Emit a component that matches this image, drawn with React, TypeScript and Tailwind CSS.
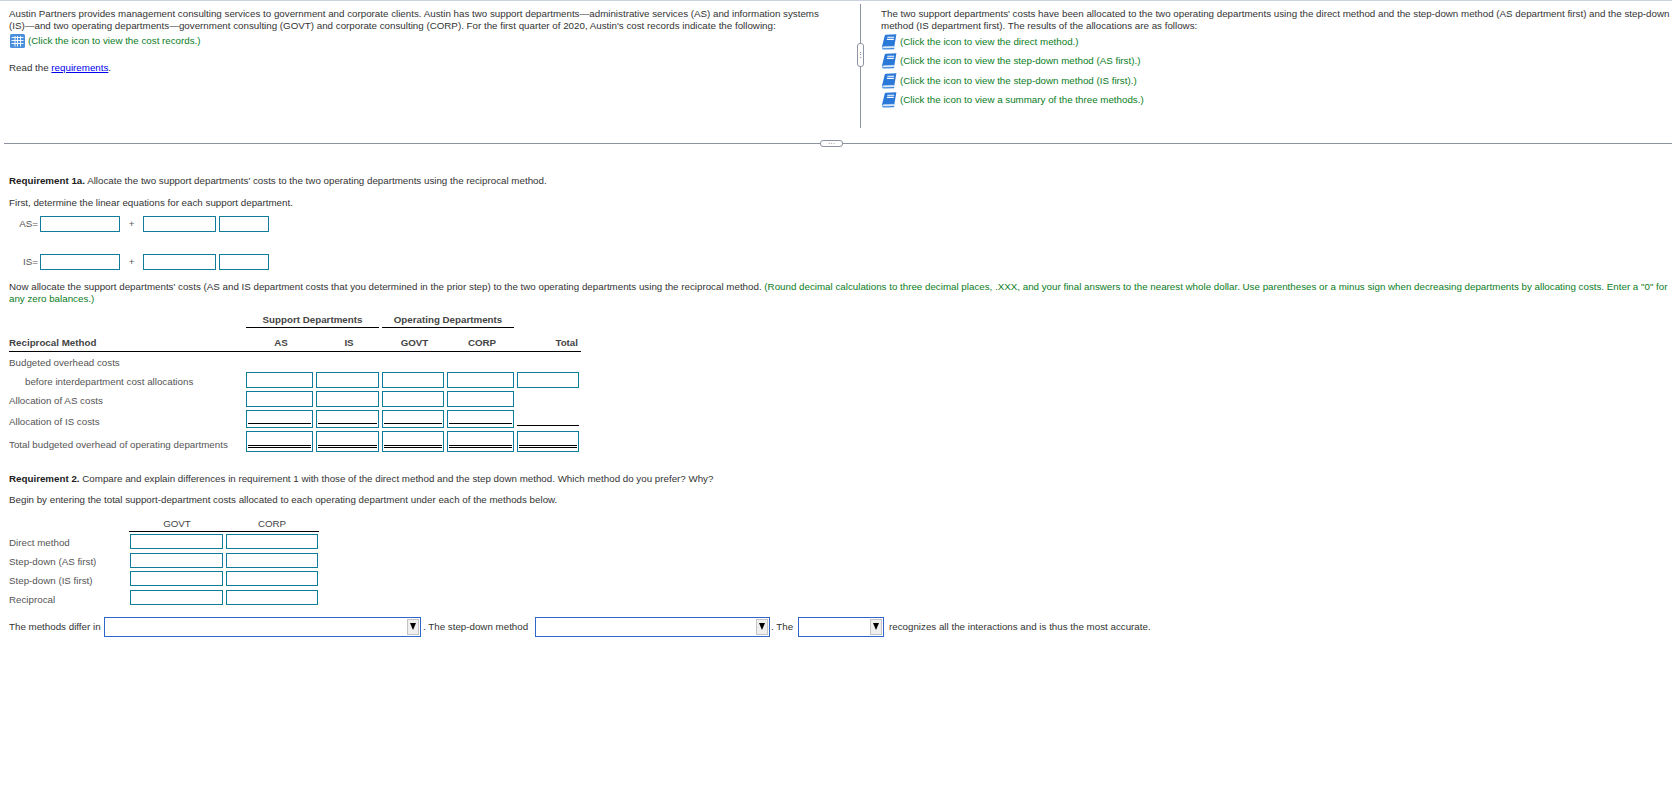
import type { ReactNode } from "react";

function GridIcon() {
  return (
    <svg width="15" height="14" viewBox="0 0 15 14" className="shrink-0">
      <rect x="0" y="0" width="15" height="14" rx="1.5" fill="#4a8fdc" />
      <path d="M1.5 3.5H13.5M1.5 6.5H13.5M1.5 9.5H13.5M5 2V12.5M7.5 2V12.5M10.5 2V12.5" stroke="#ffffff" strokeWidth="0.9" />
    </svg>
  );
}

function BookIcon() {
  return (
    <svg width="16" height="16" viewBox="0 0 16 16" className="shrink-0">
      <path d="M3.8 1.6 Q4 0.8 5 0.7 L15.4 0.2 L13.3 12.4 L3.2 12.8 Q1.5 13 1.3 14 L0.9 13 Z" fill="#2a78d8" />
      <path d="M1.2 13.6 Q1.4 12.6 3 12.5 L13.3 12.2 L13 13.6 L3 13.9 Z" fill="#ffffff" stroke="#7db0e8" strokeWidth="0.4" />
      <path d="M1 14 Q1.2 15.5 3 15.6 L13 15.3 L13.4 14 L3 14.3 Z" fill="#3a86de" />
      <path d="M6.3 3.2H13.2M5.9 5.4H12.8" stroke="#ffffff" strokeWidth="1.1" />
    </svg>
  );
}

function Input({ className }: { className: string }) {
  return <div className={`border border-[#0f7c9a] bg-white ${className}`} />;
}

function MethodLink({ children }: { children: ReactNode }) {
  return (
    <div className="flex items-center gap-[3px] h-[19.5px] text-[#0a7d1c]">
      <BookIcon />
      <span>{children}</span>
    </div>
  );
}

function Dropdown({ className }: { className: string }) {
  return (
    <div className={`h-5 border border-[#2f66c9] bg-white flex items-center justify-end pr-px ${className}`}>
      <div className="w-[12px] h-[16px] bg-[#efefef] border border-[#c4c4c4] flex justify-center pt-[3px]">
        <div className="w-0 h-0 border-l-[3.5px] border-r-[3.5px] border-t-[7px] border-l-transparent border-r-transparent border-t-black" />
      </div>
    </div>
  );
}

// one row of the reciprocal table, cells hold 3px of right gap
function CostRow({ label, indent, h, pt = "pt-[4px]", children }: { label?: string; indent?: boolean; h: string; pt?: string; children?: ReactNode }) {
  return (
    <div className={`flex ${h}`}>
      <div className={`w-[237px] flex items-center ${pt} text-[#555] ${indent ? "pl-[16px]" : ""}`}>{label}</div>
      {children}
    </div>
  );
}

const cols = ["w-[67px] mr-[3px]", "w-[63px] mr-[3px]", "w-[62px] mr-[3px]", "w-[67px] mr-[3px]", "w-[62px]"];

function Single({ className }: { className: string }) {
  return (
    <div className={`border border-[#0f7c9a] h-[18px] px-[1px] ${className}`}>
      <div className="h-[13px] border-b border-black" />
    </div>
  );
}

function Double({ className }: { className: string }) {
  return (
    <div className={`border border-[#0f7c9a] h-[21px] px-[1px] ${className}`}>
      <div className="h-[16px] border-b-[3px] border-double border-black" />
    </div>
  );
}

function CompareRow({ label, mt, pt = "pt-[3px]" }: { label: string; mt: string; pt?: string }) {
  return (
    <div className={`flex h-[15px] ${mt}`}>
      <div className={`w-[121px] flex items-center ${pt} text-[#555]`}>{label}</div>
      <Input className="w-[93px] h-[15px] mr-[3px]" />
      <Input className="w-[92px] h-[15px]" />
    </div>
  );
}

export default function App() {
  return (
    <div className="w-[1672px] h-[790px] bg-white overflow-hidden whitespace-nowrap text-[9.77px] leading-[12px] text-[#333] font-['Liberation_Sans',Arial,sans-serif]">
      <div className="h-px bg-[#ccd2e0]" />

      {/* Top panes */}
      <div className="flex h-[142px]">
        <div className="w-[860px] pl-[9px] pt-[7px]">
          <p>
            Austin Partners provides management consulting services to government and corporate clients. Austin has two support departments—administrative services (AS) and information systems
            <br />
            (IS)—and two operating departments—government consulting (GOVT) and corporate consulting (CORP). For the first quarter of 2020, Austin's cost records indicate the following:
          </p>
          <div className="flex items-center gap-[3px] mt-[3px] ml-[1px] h-[12px] text-[#0a7d1c]">
            <GridIcon />
            <span>(Click the icon to view the cost records.)</span>
          </div>
          <p className="mt-[15px]">
            Read the <span className="text-[#0000ee] underline">requirements</span>.
          </p>
        </div>

        <div className="relative w-px h-[124px] mt-[3px] bg-[#8d93a1]">
          <div className="absolute left-[-3px] top-[39px] w-[7px] h-6 rounded-[3px] border border-[#8d93a1] bg-white flex items-center justify-center text-[7px] leading-[6px] text-[#555]">
            ⋮
          </div>
        </div>

        <div className="pl-[20px] pt-[7px] flex-1">
          <p>
            The two support departments' costs have been allocated to the two operating departments using the direct method and the step-down method (AS department first) and the step-down
            <br />
            method (IS department first). The results of the allocations are as follows:
          </p>
          <MethodLink>(Click the icon to view the direct method.)</MethodLink>
          <MethodLink>(Click the icon to view the step-down method (AS first).)</MethodLink>
          <MethodLink>(Click the icon to view the step-down method (IS first).)</MethodLink>
          <MethodLink>(Click the icon to view a summary of the three methods.)</MethodLink>
        </div>
      </div>

      <div className="relative h-px ml-[4px] bg-[#8d93a1]">
        <div className="absolute left-[816px] top-[-3px] w-[23px] h-[7px] rounded-[3px] border border-[#8d93a1] bg-white flex items-center justify-center text-[7px] leading-[6px] text-[#555]">
          ···
        </div>
      </div>

      {/* Requirement 1a */}
      <div className="pl-[9px]">
        <p className="mt-[31px]">
          <b className="text-[#222]">Requirement 1a.</b> Allocate the two support departments' costs to the two operating departments using the reciprocal method.
        </p>
        <p className="mt-[10px]">First, determine the linear equations for each support department.</p>

        <div className="flex items-center h-4 mt-[7px] text-[#555]">
          <span className="w-[29px] text-right mr-[2px]">AS=</span>
          <Input className="w-[80px] h-4" />
          <span className="w-[23px] text-center">+</span>
          <Input className="w-[73px] h-4 mr-[3px]" />
          <Input className="w-[50px] h-4" />
        </div>
        <div className="flex items-center h-4 mt-[22px] text-[#555]">
          <span className="w-[29px] text-right mr-[2px]">IS=</span>
          <Input className="w-[80px] h-4" />
          <span className="w-[23px] text-center">+</span>
          <Input className="w-[73px] h-4 mr-[3px]" />
          <Input className="w-[50px] h-4" />
        </div>

        <p className="mt-[11px]">
          Now allocate the support departments' costs (AS and IS department costs that you determined in the prior step) to the two operating departments using the reciprocal method.{" "}
          <span className="text-[#0a7d1c]">
            (Round decimal calculations to three decimal places, .XXX, and your final answers to the nearest whole dollar. Use parentheses or a minus sign when decreasing departments by allocating costs. Enter a "0" for
            <br />
            any zero balances.)
          </span>
        </p>

        {/* Reciprocal table */}
        <div className="flex mt-[9px] font-bold text-[#444] text-center">
          <div className="w-[237px]" />
          <div className="w-[133px] h-[14px] border-b border-black mr-[3px]">Support Departments</div>
          <div className="w-[132px] h-[14px] border-b border-black">Operating Departments</div>
        </div>
        <div className="flex w-[572px] h-[24px] pt-[9px] border-b border-black font-bold text-[#444] text-center">
          <div className="w-[237px] text-left">Reciprocal Method</div>
          <div className="w-[70px]">AS</div>
          <div className="w-[66px]">IS</div>
          <div className="w-[65px]">GOVT</div>
          <div className="w-[70px]">CORP</div>
          <div className="w-[62px] text-right pr-[1px]">Total</div>
        </div>
        <div className="h-[12px] mt-[5px] text-[#555]">Budgeted overhead costs</div>
        <div className="mt-[3px]">
          <CostRow label="before interdepartment cost allocations" indent h="h-[16px]">
            {cols.map((c) => (
              <Input key={c} className={`${c} h-[16px]`} />
            ))}
          </CostRow>
        </div>
        <div className="mt-[3px]">
          <CostRow label="Allocation of AS costs" h="h-[16px]">
            {cols.slice(0, 4).map((c) => (
              <Input key={c} className={`${c} h-[16px]`} />
            ))}
          </CostRow>
        </div>
        <div className="mt-[3px]">
          <CostRow label="Allocation of IS costs" h="h-[18px]" pt="pt-[6px]">
            {cols.slice(0, 4).map((c) => (
              <Single key={c} className={c} />
            ))}
            <div className="w-[62px] h-[16px] border-b border-black" />
          </CostRow>
        </div>
        <div className="mt-[3px]">
          <CostRow label="Total budgeted overhead of operating departments" h="h-[21px]" pt="pt-[6px]">
            {cols.map((c) => (
              <Double key={c} className={c} />
            ))}
          </CostRow>
        </div>

        {/* Requirement 2 */}
        <p className="mt-[21px]">
          <b className="text-[#222]">Requirement 2.</b> Compare and explain differences in requirement 1 with those of the direct method and the step down method. Which method do you prefer? Why?
        </p>
        <p className="mt-[9px]">Begin by entering the total support-department costs allocated to each operating department under each of the methods below.</p>

        <div className="flex mt-[12px]">
          <div className="w-[120px]" />
          <div className="flex w-[190px] h-[14px] border-b border-black text-[#444] font-medium text-center">
            <div className="w-[96px]">GOVT</div>
            <div className="w-[94px]">CORP</div>
          </div>
        </div>
        <CompareRow label="Direct method" mt="mt-[2px]" />
        <CompareRow label="Step-down (AS first)" mt="mt-[4px]" />
        <CompareRow label="Step-down (IS first)" mt="mt-[3px]" pt="pt-[5px]" />
        <CompareRow label="Reciprocal" mt="mt-[4px]" pt="pt-[5px]" />

        <div className="flex items-center mt-[12px]">
          <span className="w-[95px]">The methods differ in</span>
          <Dropdown className="w-[317px]" />
          <span className="w-[114px] pl-[2px]">. The step-down method</span>
          <Dropdown className="w-[235px]" />
          <span className="w-[28px] pl-[1px]">. The</span>
          <Dropdown className="w-[86px]" />
          <span className="ml-[5px]">recognizes all the interactions and is thus the most accurate.</span>
        </div>
      </div>
    </div>
  );
}
